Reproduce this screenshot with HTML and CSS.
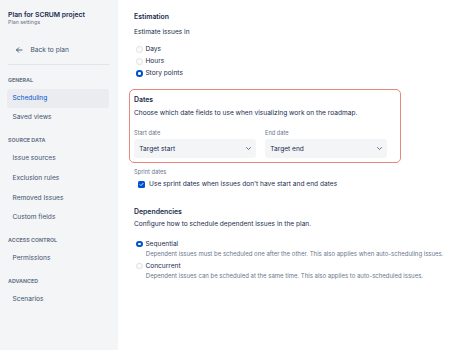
FILE: index.html
```html
<!DOCTYPE html>
<html lang="en">
<head>
  <meta charset="UTF-8">
  <meta name="viewport" content="width=device-width, initial-scale=1.0">
  <title>Plan settings - Scheduling</title>
  <link rel="stylesheet" href="styles.css">
</head>
<body>
  <div class="page">
    <nav class="sidebar">
      <div class="sidebar-header">
        <div class="project-title">Plan for SCRUM project</div>
        <div class="project-sub">Plan settings</div>
      </div>

      <a href="#" class="back-link">
        <svg class="back-icon" viewBox="0 0 16 16" width="8" height="8">
          <path d="M14 8H3M7.5 3.5L3 8l4.5 4.5" fill="none" stroke="#42526e" stroke-width="1.8" stroke-linecap="round" stroke-linejoin="round"/>
        </svg>
        <span>Back to plan</span>
      </a>
      <div class="divider"></div>

      <div class="nav-heading">General</div>
      <a href="#" class="nav-item active">Scheduling</a>
      <a href="#" class="nav-item">Saved views</a>

      <div class="nav-heading">Source data</div>
      <a href="#" class="nav-item">Issue sources</a>
      <a href="#" class="nav-item">Exclusion rules</a>
      <a href="#" class="nav-item">Removed Issues</a>
      <a href="#" class="nav-item">Custom fields</a>

      <div class="nav-heading">Access control</div>
      <a href="#" class="nav-item">Permissions</a>

      <div class="nav-heading">Advanced</div>
      <a href="#" class="nav-item">Scenarios</a>
    </nav>

    <main class="content">
      <!-- Estimation -->
      <section class="estimation">
        <h2 class="section-title">Estimation</h2>
        <p class="section-text">Estimate issues in</p>
        <div class="radio-list">
          <label class="radio"><span class="radio-dot"></span>Days</label>
          <label class="radio"><span class="radio-dot"></span>Hours</label>
          <label class="radio"><span class="radio-dot checked"></span>Story points</label>
        </div>
      </section>

      <!-- Dates -->
      <section class="dates-box">
        <h2 class="section-title">Dates</h2>
        <p class="section-text">Choose which date fields to use when visualizing work on the roadmap.</p>
        <div class="date-fields">
          <div class="field">
            <div class="field-label">Start date</div>
            <div class="select">
              <span>Target start</span>
              <svg class="chevron" viewBox="0 0 10 6" width="5" height="3"><path d="M1 1l4 4 4-4" fill="none" stroke="#42526e" stroke-width="1.6" stroke-linecap="round" stroke-linejoin="round"/></svg>
            </div>
          </div>
          <div class="field">
            <div class="field-label">End date</div>
            <div class="select">
              <span>Target end</span>
              <svg class="chevron" viewBox="0 0 10 6" width="5" height="3"><path d="M1 1l4 4 4-4" fill="none" stroke="#42526e" stroke-width="1.6" stroke-linecap="round" stroke-linejoin="round"/></svg>
            </div>
          </div>
        </div>
      </section>

      <!-- Sprint dates -->
      <section class="sprint">
        <div class="field-label">Sprint dates</div>
        <label class="checkbox">
          <span class="check-box">
            <svg viewBox="0 0 10 10" width="5" height="5"><path d="M2 5.2l2 2 4-4.4" fill="none" stroke="#fff" stroke-width="1.6" stroke-linecap="round" stroke-linejoin="round"/></svg>
          </span>
          Use sprint dates when issues don't have start and end dates
        </label>
      </section>

      <!-- Dependencies -->
      <section class="dependencies">
        <h2 class="section-title">Dependencies</h2>
        <p class="section-text">Configure how to schedule dependent issues in the plan.</p>
        <div class="radio-list dep-list">
          <label class="radio"><span class="radio-dot checked"></span>Sequential</label>
          <div class="radio-help">Dependent issues must be scheduled one after the other. This also applies when auto-scheduling issues.</div>
          <label class="radio"><span class="radio-dot"></span>Concurrent</label>
          <div class="radio-help">Dependent issues can be scheduled at the same time. This also applies to auto-scheduled issues.</div>
        </div>
      </section>
    </main>
  </div>
</body>
</html>
```

FILE: styles.css
```css
body {
  margin: 0;
  font-family: 'Inter', 'Noto Sans', sans-serif;
  font-size: 6.6px;
  color: #172b4d;
  background-color: #fff;
}
.page {
  display: flex;
  align-items: flex-start;
}

/* sidebar */
.sidebar {
  width: 118px;
  height: 350px;
  flex-shrink: 0;
  box-sizing: border-box;
  padding: 10px 9px 0 7px;
  background-color: #f4f5f7;
  display: flex;
  flex-direction: column;
}
.sidebar-header {
  padding-left: 1px;
}
.project-title {
  font-size: 6.8px;
  font-weight: 600;
  line-height: 9px;
  color: #172b4d;
}
.project-sub {
  font-size: 5.3px;
  line-height: 7px;
  color: #6b778c;
}
.back-link {
  display: flex;
  align-items: center;
  height: 19.5px;
  margin-top: 14.7px;
  padding-left: 7.5px;
  gap: 8px;
  color: #42526e;
  text-decoration: none;
}
.back-icon {
  display: block;
}
.divider {
  height: 1px;
  margin: 3.5px 0 0 1px;
  background-color: #e2e4e9;
}
.nav-heading {
  padding: 9.5px 0 5px 1px;
  line-height: 7px;
  font-size: 5.3px;
  font-weight: 700;
  text-transform: uppercase;
  color: #6b778c;
}
.divider + .nav-heading {
  padding-top: 12px;
}
.nav-item {
  display: block;
  height: 19.6px;
  line-height: 19.6px;
  padding-left: 5.5px;
  border-radius: 3px;
  color: #42526e;
  text-decoration: none;
}
.nav-item.active {
  background-color: #ebecf0;
  color: #0052cc;
}

/* main content */
.content {
  flex: 1;
  padding: 11.7px 0 0 16px;
}
.section-title {
  margin: 0;
  font-size: 6.9px;
  font-weight: 600;
  line-height: 10px;
  color: #172b4d;
}
.section-text {
  margin: 5.3px 0 0;
  line-height: 10px;
}
.radio-list {
  display: flex;
  flex-direction: column;
  margin-top: 6.3px;
}
.radio {
  display: flex;
  align-items: center;
  height: 12px;
}
.radio-dot {
  width: 6.5px;
  height: 6.5px;
  margin: 0 2.6px 0 2.3px;
  box-sizing: border-box;
  border-radius: 50%;
  border: 1px solid #dfe1e6;
  background-color: #fafbfc;
}
.radio-dot.checked {
  border: 2px solid #0052cc;
  background-color: #fff;
}
.radio-help {
  height: 8px;
  line-height: 8px;
  margin-bottom: 2px;
  padding-left: 11.8px;
  font-size: 6px;
  color: #6b778c;
}

/* dates box */
.dates-box {
  width: 272px;
  box-sizing: border-box;
  margin: 10px 0 0 -5px;
  padding: 4.4px 4px 4.2px 4px;
  border: 1px solid #e8877c;
  border-radius: 5px;
}
.dates-box .section-text {
  margin-top: 3.6px;
}
.date-fields {
  display: flex;
  gap: 9px;
  margin-top: 11px;
}
.field {
  width: 122px;
}
.field-label {
  font-size: 5.7px;
  line-height: 8px;
  color: #6b778c;
}
.select {
  display: flex;
  align-items: center;
  justify-content: space-between;
  height: 18.5px;
  margin-top: 2px;
  padding: 0 5px 0 5.3px;
  border-radius: 3px;
  background-color: #f4f5f7;
}
.chevron {
  display: block;
}

/* sprint dates */
.sprint {
  margin-top: 5.3px;
}
.checkbox {
  display: flex;
  align-items: center;
  height: 12px;
  margin-top: 2px;
}
.check-box {
  display: flex;
  align-items: center;
  justify-content: center;
  width: 7px;
  height: 7px;
  margin: 0 4px 0 4px;
  border-radius: 1.5px;
  background-color: #0052cc;
}
.check-box svg {
  display: block;
}

/* dependencies */
.dependencies {
  margin-top: 16.4px;
}
.dependencies .section-text {
  margin-top: 2.3px;
}
.dep-list {
  margin-top: 9px;
}
```
